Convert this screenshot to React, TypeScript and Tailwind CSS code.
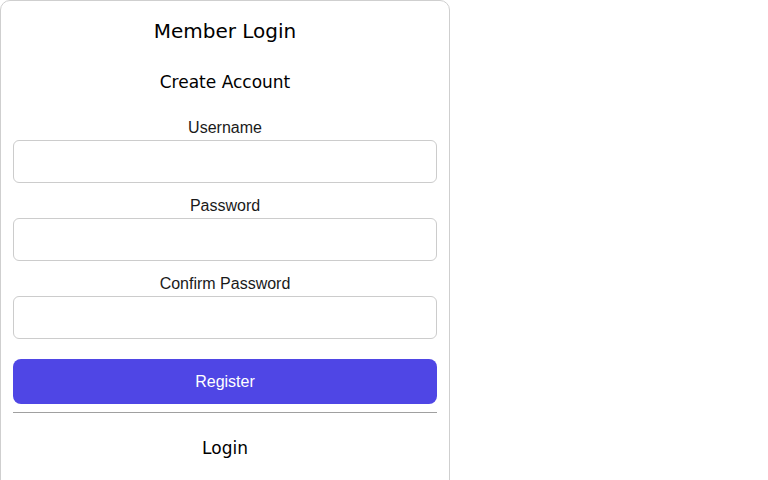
export default function App() {
  const fields = ['Username', 'Password', 'Confirm Password']

  return (
    <div className="min-h-screen bg-white">
      <div className="w-[450px] rounded-[10px] border border-[#cfcfcf] bg-white px-3 pt-3 pb-8">
        {/* Headings */}
        <h1 className="mt-[6px] text-center text-[20px] leading-6 text-black font-['DejaVu_Sans',sans-serif]">
          Member Login
        </h1>
        <h2 className="mt-[27px] text-center text-[17px] leading-6 text-black font-['DejaVu_Sans',sans-serif]">
          Create Account
        </h2>

        {/* Form */}
        <form className="mt-6 font-['Liberation_Sans',Arial,sans-serif]">
          {fields.map((label) => (
            <div key={label} className="mb-[13px]">
              <label className="mb-[3px] block text-center text-base leading-[19px] text-[#1a1a1a]">{label}</label>
              <input
                type={label === 'Username' ? 'text' : 'password'}
                className="block h-[43px] w-full rounded-md border border-[#cccccc] bg-white px-3 outline-none"
              />
            </div>
          ))}
          <button
            type="button"
            className="mt-5 block h-[45px] w-full rounded-lg bg-[#4f46e5] text-base text-white"
          >
            Register
          </button>
        </form>

        <hr className="mt-2 border-0 border-t border-[#a0a0a0]" />

        <h2 className="mt-[23px] text-center text-[17px] leading-6 text-black font-['DejaVu_Sans',sans-serif]">
          Login
        </h2>
      </div>
    </div>
  )
}
